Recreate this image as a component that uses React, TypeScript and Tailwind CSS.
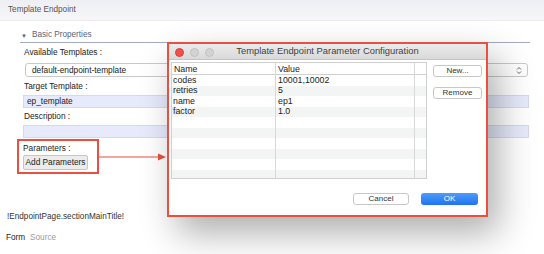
import React from "react";

const rows: [string, string][] = [
  ["codes", "10001,10002"],
  ["retries", "5"],
  ["name", "ep1"],
  ["factor", "1.0"],
  ["", ""],
  ["", ""],
  ["", ""],
  ["", ""],
  ["", ""],
  ["", ""],
];

export default function App() {
  return (
    <div
      className="relative w-[544px] h-[254px] overflow-hidden bg-white text-[#222]"
      style={{ fontFamily: '"Liberation Sans", Arial, sans-serif' }}
    >
      {/* Header */}
      <div className="h-[21px] flex items-center pl-[8px] text-[8.2px] text-[#555] bg-gradient-to-b from-[#eeeff3] to-[#f7f7f9] border-b border-[#ececf0]">
        Template Endpoint
      </div>

      {/* Basic properties */}
      <div className="ml-[20px] mr-[14px] mt-[8px] h-[14px] flex items-center border-b border-[#a3abbd]">
        <span className="ml-[1px] text-[6px] text-[#56627a] leading-none">▼</span>
        <span className="ml-[5px] text-[8.2px] text-[#56627a]">Basic Properties</span>
      </div>

      <div className="pl-[24px] pr-[14px]">
        <div className="mt-[4px] h-[11px] flex items-center text-[8.3px]">Available Templates :</div>
        <div className="mt-[5px] ml-[1px] h-[14px] w-[503px] flex items-center justify-between rounded-[3px] border border-[#c9c9c9] bg-white px-[6px] text-[8.3px]">
          <span>default-endpoint-template</span>
          <svg width="6" height="9" viewBox="0 0 6 9" className="mr-[-1px]">
            <path d="M1 3.5 L3 1.5 L5 3.5" fill="none" stroke="#555" strokeWidth="0.9" />
            <path d="M1 5.5 L3 7.5 L5 5.5" fill="none" stroke="#555" strokeWidth="0.9" />
          </svg>
        </div>
        <div className="mt-[4px] h-[11px] flex items-center text-[8.3px]">Target Template :</div>
        <div className="mt-[3px] h-[13px] w-[506px] ml-[-1px] flex items-center border border-[#d6d9ea] bg-[#e7eafb] px-[3px] text-[8.3px]">
          ep_template
        </div>
        <div className="mt-[3px] h-[11px] flex items-center text-[8.3px]">Description :</div>
        <div className="mt-[3px] h-[13px] w-[506px] ml-[-1px] border border-[#d6d9ea] bg-[#e7eafb]" />
      </div>

      {/* Parameters red box */}
      <div className="ml-[17px] mt-[1px] w-[82px] h-[35px] border-2 border-[#e9503f] pl-[4px] pt-[2px]">
        <div className="h-[10px] flex items-center text-[8.3px] whitespace-nowrap">Parameters :</div>
        <div className="mt-[2px] w-[65px] h-[15px] flex items-center justify-center rounded-[2px] border border-[#c6c6c6] bg-[#ececec] text-[8.3px] whitespace-nowrap">
          Add Parameters
        </div>
      </div>

      <div className="mt-[38px] ml-[7px] h-[11px] flex items-center text-[8.2px] text-[#333]">
        !EndpointPage.sectionMainTitle!
      </div>
      <div className="mt-[10px] ml-[6px] h-[11px] flex items-center gap-[5px] text-[8.2px]">
        <span className="text-[#222]">Form</span>
        <span className="text-[#9a9a9a]">Source</span>
      </div>

      {/* Arrow */}
      <svg className="absolute left-[98px] top-[152px]" width="70" height="10" viewBox="0 0 70 10">
        <line x1="0" y1="5" x2="62" y2="5" stroke="#e9503f" strokeWidth="1.2" />
        <path d="M60 1.5 L68 5 L60 8.5 Z" fill="#e9503f" />
      </svg>

      {/* Dialog */}
      <div className="absolute left-[167px] top-[42px] w-[321px] h-[175px] flex flex-col border-2 border-[#e9503f] bg-white shadow-[10px_16px_34px_rgba(0,0,0,0.32)]">
        <div className="relative h-[16px] flex items-center justify-center bg-gradient-to-b from-[#ececec] to-[#d9d9d9] border-b border-[#c4c4c4]">
          <div className="absolute left-[6px] top-[3.5px] flex gap-[6px]">
            <span className="block w-[9px] h-[9px] rounded-full bg-[#f0504a] border border-[#d8403a]" />
            <span className="block w-[9px] h-[9px] rounded-full bg-[#d3d3d3] border border-[#c2c2c2]" />
            <span className="block w-[9px] h-[9px] rounded-full bg-[#d3d3d3] border border-[#c2c2c2]" />
          </div>
          <span className="text-[9.4px] text-[#3f3f3f]">Template Endpoint Parameter Configuration</span>
        </div>

        <div className="flex pl-[2px] pt-[2px]">
          <div className="w-[256px] h-[117px] border border-[#d0d0d0] overflow-hidden">
            <div className="grid grid-cols-[104px_139px_11px] h-[12px] border-b border-[#d0d0d0] text-[8.8px]">
              <div className="border-r border-[#d8d8d8] pl-[2px] flex items-center">Name</div>
              <div className="border-r border-[#d8d8d8] pl-[2px] flex items-center">Value</div>
              <div />
            </div>
            {rows.map(([n, v], i) => (
              <div
                key={i}
                className={`grid grid-cols-[104px_139px_11px] h-[10.5px] text-[8.8px] leading-none ${
                  i % 2 === 1 ? "bg-[#f3f4f4]" : "bg-white"
                }`}
              >
                <div className="border-r border-[#d8d8d8] pl-[1px] flex items-center">{n}</div>
                <div className="border-r border-[#d8d8d8] pl-[2px] flex items-center">{v}</div>
                <div />
              </div>
            ))}
          </div>
          <div className="ml-[6px] flex flex-col">
            <div className="mt-[3px] w-[49px] h-[12px] flex items-center justify-center rounded-[3px] border border-[#c8c8c8] bg-white text-[8px] text-[#333]">
              New...
            </div>
            <div className="mt-[10px] w-[49px] h-[12px] flex items-center justify-center rounded-[3px] border border-[#c8c8c8] bg-white text-[8px] text-[#333]">
              Remove
            </div>
          </div>
        </div>

        <div className="mt-[14px] flex justify-end gap-[12px] pr-[8px]">
          <div className="w-[56px] h-[12px] flex items-center justify-center rounded-[3px] border border-[#c8c8c8] bg-white text-[8px] text-[#333]">
            Cancel
          </div>
          <div className="w-[57px] h-[12px] flex items-center justify-center rounded-[3px] bg-gradient-to-b from-[#4f9cf8] to-[#1f72f0] text-[8px] text-white">
            OK
          </div>
        </div>
      </div>
    </div>
  );
}
